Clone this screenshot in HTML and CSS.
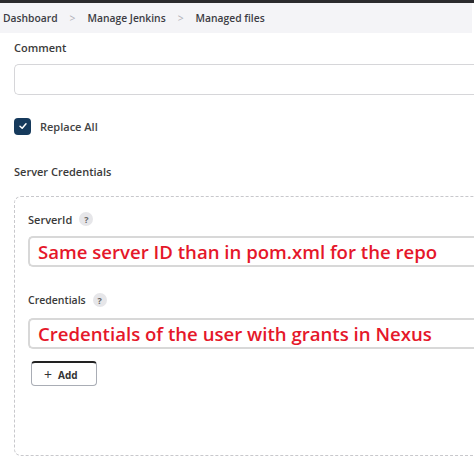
FILE: index.html
```html
<!DOCTYPE html>
<html>
<head>
	<title>Managed files</title>
	<link rel="stylesheet" href="styles.css">
</head>
<body>

<div class="topStrip"></div>
<div class="crumbBar">
	<span>Dashboard</span><span class="crumbSep">&gt;</span>
	<span>Manage Jenkins</span><span class="crumbSep">&gt;</span>
	<span>Managed files</span>
</div>

<div class="formBody">
	<div class="fieldLabel">Comment</div>
	<div class="textBox"></div>

	<div class="checkRow">
		<span class="checkBox">
			<svg width="10" height="10" viewBox="0 0 10 10"><path d="M2 5.2 L4.2 7.2 L8 2.8" fill="none" stroke="#fff" stroke-width="1.5" stroke-linecap="round" stroke-linejoin="round"/></svg>
		</span>
		<span class="checkText">Replace All</span>
	</div>

	<div class="fieldLabel sectionLabel">Server Credentials</div>
	<div class="repeatBox">
		<div class="fieldLabel">ServerId <span class="helpDot">?</span></div>
		<div class="textBox redBox">Same server ID than in pom.xml for the repo</div>

		<div class="fieldLabel smallLabel">Credentials <span class="helpDot">?</span></div>
		<div class="textBox redBox">Credentials of the user with grants in Nexus</div>

		<button type="button" class="addButton"><span class="plus">+</span>Add</button>
	</div>
</div>

</body>
</html>
```

FILE: styles.css
```css
body {margin: 0;font-family: "Open Sans", "Noto Sans", sans-serif;color: #333;background: #fff;overflow: hidden;}

.topStrip {height: 3px;background: #2b2b2e;}

.crumbBar {
	height: 30px;
	width: 469px;
	background: #f4f4f7;
	display: flex;
	align-items: center;
	padding-left: 3px;
	font-size: 10.3px;
	font-weight: 600;
	color: #3c3c44;
}
.crumbSep {color: #b0b0b8;font-weight: 400;margin: 0 12px 0 12px;}

.formBody {padding: 6px 0 0 14px;}

.fieldLabel {font-size: 11px;font-weight: 600;color: #3a3a3a;height: 16px;display: flex;align-items: center;}
.smallLabel {font-size: 10.5px;}
.sectionLabel {margin-top: 28px;}

.textBox {
	height: 31px;
	margin: 9px -20px 0 0;
	border: 1px solid #d6d6d9;
	border-right: none;
	border-radius: 5px 0 0 5px;
	box-sizing: border-box;
}
.redBox {
	color: #e5172a;
	font-size: 18.6px;
	font-weight: 600;
	line-height: 28px;
	padding-left: 8px;
	white-space: nowrap;
	overflow: hidden;
	margin-top: 9px;
	border-color: #d8d8d8;
	border-width: 2px 0 2px 2px;
}

.checkRow {display: flex;align-items: center;margin-top: 22px;height: 18px;}
.checkBox {
	width: 17px;
	height: 17px;
	border-radius: 4px;
	background: #163a5c;
	display: flex;
	align-items: center;
	justify-content: center;
}
.checkText {margin-left: 9px;font-size: 11px;font-weight: 600;color: #444;}

.repeatBox {
	margin: 17px -20px 0 0;
	height: 260px;
	box-sizing: border-box;
	border: 1px dashed #c8c8cc;
	border-right: none;
	border-radius: 7px 0 0 7px;
	padding: 14px 0 0 13px;
}
.repeatBox .redBox {margin-right: 0;}
.repeatBox .smallLabel {margin-top: 25px;}
.repeatBox .smallLabel + .redBox {margin-top: 10px;}

.helpDot {
	display: inline-flex;
	width: 14px;
	height: 14px;
	border-radius: 7px;
	background: #e6e6e9;
	color: #666;
	font-size: 9px;
	font-weight: 700;
	align-items: center;
	justify-content: center;
	margin-left: 7px;
}

.addButton {
	margin: 12px 0 0 3px;
	width: 66px;
	height: 25px;
	display: flex;
	align-items: center;
	padding: 2px 0 0 12px;
	background: #fff;
	border: 1px solid #a9adb5;
	border-top: 2px solid #222;
	border-radius: 4px;
	font-family: "Open Sans", sans-serif;
	font-size: 10px;
	font-weight: 700;
	color: #333;
}
.plus {font-size: 14px;font-weight: 400;margin-right: 6px;line-height: 14px;}
```
